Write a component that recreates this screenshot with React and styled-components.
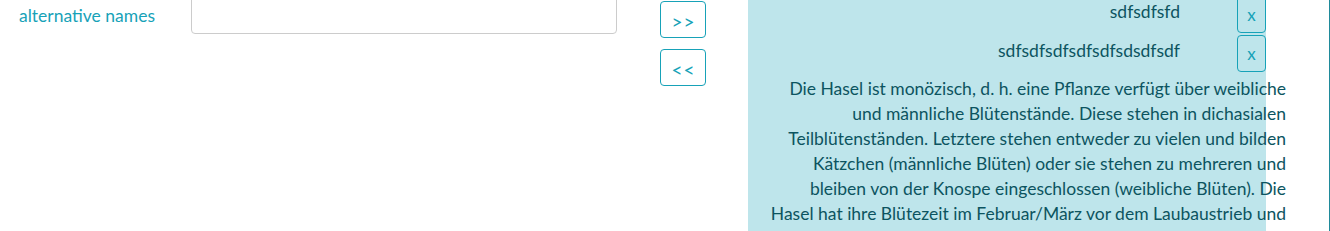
import React from "react";
import styled, { createGlobalStyle } from "styled-components";

const GlobalStyle = createGlobalStyle`
  html, body {
    margin: 0;
    padding: 0;
    background: #fff;
    overflow: hidden;
  }
  body {
    font-family: Lato, "Open Sans", sans-serif;
  }
`;

const Page = styled.div`
  display: flex;
  align-items: flex-start;
  width: 1330px;
  height: 240px;
  margin-top: -4px;
  box-sizing: border-box;
  border-right: 1px solid #1f8a9a;
`;

const Field = styled.div`
  display: flex;
  align-items: center;
  width: 617px;
  padding-left: 19px;
  box-sizing: border-box;
`;

const Label = styled.label`
  width: 172px;
  font-size: 17.5px;
  color: #17a2b8;
`;

const Input = styled.input`
  width: 426px;
  height: 38px;
  box-sizing: border-box;
  border: 1px solid #ccc;
  border-radius: 4px;
  outline: none;
`;

const Arrows = styled.div`
  display: flex;
  flex-direction: column;
  gap: 11px;
  margin: 5px 42px 0 43px;
`;

const OutlineButton = styled.button`
  width: ${(p) => p.w || 46}px;
  height: 37px;
  box-sizing: border-box;
  padding: ${(p) => p.pt || 0}px 0 0;
  background: transparent;
  border: 1px solid #17a2b8;
  border-radius: 4px;
  color: #17a2b8;
  font-family: Lato, sans-serif;
  font-size: ${(p) => p.fs || 16}px;
  letter-spacing: ${(p) => p.ls || 0}px;
  text-indent: ${(p) => p.ls || 0}px;
  cursor: pointer;
`;

const Panel = styled.div`
  width: 518px;
  height: 240px;
  background: #bee5eb;
  color: #0c5460;
  display: flex;
  flex-direction: column;
  gap: 2px;
`;

const Item = styled.div`
  display: flex;
  align-items: center;
  justify-content: flex-end;
  gap: 57px;
  font-size: 17.5px;

  & > span {
    padding-bottom: 6px;
  }
`;

const Description = styled.p`
  margin: 2px -20px 0 0;
  font-size: 17.5px;
  line-height: 25px;
  text-align: right;
`;

const items = ["sdfsdfsfd", "sdfsdfsdfsdfsdfsdsdfsdf"];

const lines = [
  "Die Hasel ist monözisch, d. h. eine Pflanze verfügt über weibliche",
  "und männliche Blütenstände. Diese stehen in dichasialen",
  "Teilblütenständen. Letztere stehen entweder zu vielen und bilden",
  "Kätzchen (männliche Blüten) oder sie stehen zu mehreren und",
  "bleiben von der Knospe eingeschlossen (weibliche Blüten). Die",
  "Hasel hat ihre Blütezeit im Februar/März vor dem Laubaustrieb und",
];

export default function App() {
  return (
    <>
      <GlobalStyle />
      <Page>
        <Field>
          <Label>alternative names</Label>
          <Input />
        </Field>
        <Arrows>
          <OutlineButton fs={19} ls={1} pt={3}>&gt;&gt;</OutlineButton>
          <OutlineButton fs={19} ls={1} pt={3}>&lt;&lt;</OutlineButton>
        </Arrows>
        <Panel>
          {items.map((it) => (
            <Item key={it}>
              <span>{it}</span>
              <OutlineButton w={29} fs={17}>
                x
              </OutlineButton>
            </Item>
          ))}
          <Description>
            {lines.map((l, i) => (
              <React.Fragment key={i}>
                {l}
                {i < lines.length - 1 && <br />}
              </React.Fragment>
            ))}
          </Description>
        </Panel>
      </Page>
    </>
  );
}
